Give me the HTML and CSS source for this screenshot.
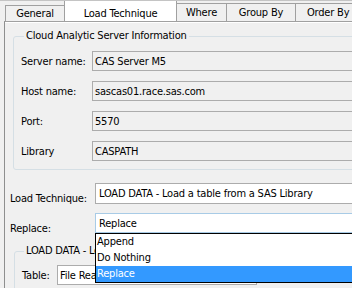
FILE: index.html
```html
<!DOCTYPE html>
<html>
<head>
<meta charset="utf-8">
<link rel="stylesheet" href="styles.css">
</head>
<body>
<div class="tabstrip">
  <div class="tab tab-general">General</div>
  <div class="tab tab-sel">Load Technique</div>
  <div class="tab tab-where">Where</div>
  <div class="tab tab-group">Group By</div>
  <div class="tab tab-order">Order By</div>
</div>
<div class="panel">
  <div class="panel-inner">
    <div class="group group-cas">
      <div class="group-title">Cloud Analytic Server Information</div>
      <div class="rows">
        <div class="row"><div class="lbl">Server name:</div><div class="field">CAS Server M5</div></div>
        <div class="row"><div class="lbl">Host name:</div><div class="field">sascas01.race.sas.com</div></div>
        <div class="row"><div class="lbl">Port:</div><div class="field">5570</div></div>
        <div class="row"><div class="lbl">Library</div><div class="field">CASPATH</div></div>
      </div>
    </div>
    <div class="frow frow-tech">
      <div class="flbl">Load Technique:</div>
      <div class="input">LOAD DATA - Load a table from a SAS Library</div>
    </div>
    <div class="frow frow-replace">
      <div class="flbl">Replace:</div>
      <div class="combo">Replace</div>
    </div>
    <div class="group group-load">
      <div class="group-title">LOAD DATA - Load a table from a SAS Library</div>
      <div class="trow">
        <div class="tlbl">Table:</div>
        <div class="tinput">File Reader</div>
      </div>
    </div>
  </div>
</div>
<div class="dropdown">
  <div class="opt">Append</div>
  <div class="opt">Do Nothing</div>
  <div class="opt opt-sel">Replace</div>
</div>
</body>
</html>
```
FILE: styles.css
```css
html, body {
  margin: 0;
  padding: 0;
}
body {
  width: 352px;
  height: 288px;
  overflow: hidden;
  position: relative;
  background: #f0f0f0;
  font-family: "DejaVu Sans Condensed", "Liberation Sans", Arial, sans-serif;
  font-size: 11px;
  letter-spacing: -0.2px;
  color: #000;
}
.tabstrip {
  display: flex;
  align-items: flex-end;
  height: 21px;
  padding-left: 5px;
  box-sizing: border-box;
  border-top: 1px solid #c4c4c4;
  width: 352px;
  overflow: hidden;
}
.tab {
  box-sizing: border-box;
  flex: none;
  display: flex;
  align-items: center;
  justify-content: center;
  line-height: 13px;
  background: #f0f0f0;
  border: 1px solid #a0a0a0;
  border-bottom: none;
  white-space: nowrap;
}
.tab-general {
  width: 59px;
  height: 16px;
  border-right: none;
}
.tab-sel {
  position: relative;
  z-index: 1;
  width: 113px;
  height: 24px;
  margin-top: -1px;
  margin-bottom: -3px;
  background: #fff;
  padding-top: 1px;
}
.tab-where {
  width: 50px;
  height: 18px;
  border-left: none;
}
.tab-group {
  width: 69px;
  height: 18px;
  border-left: none;
}
.tab-order {
  width: 70px;
  height: 18px;
  border-left: none;
  justify-content: flex-start;
  padding-left: 11px;
}
.panel {
  margin-left: 4px;
  border-top: 1px solid #a0a0a0;
  border-left: 1px solid #8e8f8f;
  height: 266px;
  overflow: hidden;
}
.panel-inner {
  border-top: 1px solid #fff;
  height: 265px;
}
.group {
  border: 1px solid #d5dfe5;
  border-radius: 3px;
  width: 400px;
}
.group-cas {
  margin: 13px 0 0 8px;
  padding-bottom: 8px;
}
.group-title {
  width: fit-content;
  background: #f0f0f0;
  line-height: 13px;
  padding: 0 2px;
  margin-top: -8px;
  margin-left: 10px;
  white-space: nowrap;
}
.rows {
  display: flex;
  flex-direction: column;
  gap: 10px;
  margin-top: 9px;
  padding-left: 7px;
}
.row {
  display: flex;
  align-items: center;
  height: 20px;
}
.lbl {
  flex: none;
  width: 71px;
  line-height: 13px;
  white-space: nowrap;
}
.field {
  flex: none;
  box-sizing: border-box;
  height: 20px;
  width: 300px;
  border: 1px solid #acacac;
  background: #f0f0f0;
  padding-left: 2px;
  display: flex;
  align-items: center;
  line-height: 13px;
  white-space: nowrap;
}
.frow {
  display: flex;
  align-items: flex-end;
  padding-left: 5px;
}
.frow-tech {
  margin-top: 13px;
}
.frow-replace {
  margin-top: 9px;
}
.flbl {
  flex: none;
  width: 85px;
  line-height: 13px;
  margin-bottom: -1px;
  white-space: nowrap;
}
.frow-replace .flbl {
  margin-bottom: -2px;
}
.input {
  flex: none;
  box-sizing: border-box;
  height: 21px;
  width: 300px;
  border: 1px solid #acacac;
  background: #fff;
  padding-left: 3px;
  display: flex;
  align-items: center;
  line-height: 13px;
  white-space: nowrap;
}
.combo {
  flex: none;
  box-sizing: border-box;
  height: 20px;
  width: 300px;
  border: 1px solid #a8cbe6;
  background: #fff;
  padding-left: 3px;
  display: flex;
  align-items: center;
  line-height: 13px;
  white-space: nowrap;
}
.group-load {
  margin: 18px 0 0 9px;
  height: 60px;
}
.group-load .group-title {
  margin-left: 9px;
}
.trow {
  display: flex;
  align-items: center;
  margin-top: 8px;
  padding-left: 7px;
}
.tlbl {
  flex: none;
  width: 35px;
  line-height: 13px;
}
.tinput {
  flex: none;
  box-sizing: border-box;
  height: 20px;
  width: 200px;
  border: 1px solid #acacac;
  background: #fff;
  padding-left: 2px;
  display: flex;
  align-items: center;
  line-height: 13px;
  white-space: nowrap;
}
.dropdown {
  position: absolute;
  left: 95px;
  top: 233px;
  width: 280px;
  border: 1px solid #000;
  background: #fff;
  z-index: 5;
}
.opt {
  height: 16px;
  line-height: 16px;
  padding-left: 1px;
  white-space: nowrap;
}
.opt-sel {
  background: #3399ff;
  color: #fff;
}
```
